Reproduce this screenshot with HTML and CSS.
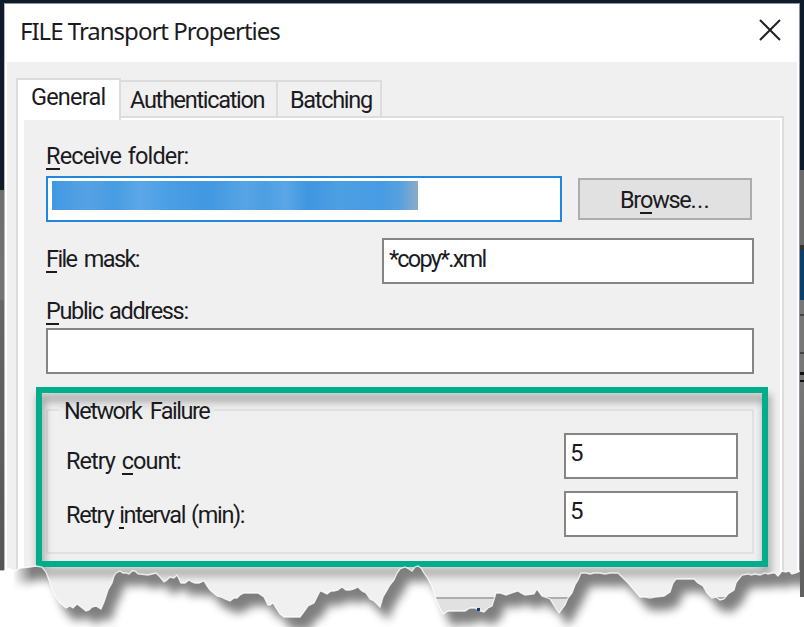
FILE: index.html
```html
<!DOCTYPE html>
<html>
<head>
    <meta charset="utf-8">
    <title>FILE Transport Properties</title>
    <link rel="stylesheet" href="styles.css">
</head>
<body>
    <div class="desktop">
        <div class="edge edge-left"></div>
        <div class="window">
            <div class="title-bar">
                <span class="title">FILE Transport Properties</span>
                <svg class="close" width="22" height="22" viewBox="0 0 22 22">
                    <path d="M1 1 L21 21 M21 1 L1 21" fill="none" stroke="#222" stroke-width="2"/>
                </svg>
            </div>
            <div class="tabs">
                <div class="tab active"><span class="t-general">General</span></div>
                <div class="tab tab-auth"><span class="t-auth">Authentication</span></div>
                <div class="tab tab-batch"><span class="t-batch">Batching</span></div>
            </div>
            <div class="panel">
                <div class="label"><span class="t-receive"><u>R</u>eceive folder:</span></div>
                <div class="row">
                    <div class="input focused"><div class="selection"></div></div>
                    <div class="button"><span class="t-browse">Br<u>o</u>wse<span class="dots">...</span></span></div>
                </div>
                <div class="row mask-row">
                    <div class="mask-label"><span class="t-mask"><u>F</u>ile mask:</span></div>
                    <div class="input mask"><span class="t-xml">*copy*.xml</span></div>
                </div>
                <div class="label public-label"><span class="t-public"><u>P</u>ublic address:</span></div>
                <div class="input public"></div>
                <div class="group">
                    <div class="legend"><span class="t-network">Network Failure</span></div>
                    <div class="row retry">
                        <span class="t-count">Retry <u>c</u>ount:</span>
                        <div class="input number">5</div>
                    </div>
                    <div class="row retry">
                        <span class="t-interval">Retry <u>i</u>nterval (min):</span>
                        <div class="input number">5</div>
                    </div>
                </div>
                <div class="footer">
                    <div class="footer-button"></div>
                    <div class="footer-button"></div>
                </div>
            </div>
        </div>
        <div class="edge edge-right"></div>
        <div class="highlight"></div>
        <!-- torn paper edge -->
        <svg class="torn" width="804" height="67" viewBox="0 560 804 67">
            <defs>
                <path id="paper" d="M-40 500 L-40 571 L4 571 L8 568 L15 571 L20 568 L30 567 L36 566 L42 567 L46 572 L50 583 L54 594 L60 603 L66 608 L70 606 L73 608 L77 604 L81 607 L86 611 L89 610 L92 607 L96 606 L101 609 L104 602 L105 599 L108 590 L112 583 L114 576 L116 573 L120 571 L123 573 L126 573 L129 574 L132 571 L135 571 L138 574 L148 575 L152 574 L156 573 L160 577 L164 582 L167 580 L170 577 L174 578 L177 575 L181 583 L185 583 L189 580 L192 582 L195 583 L199 583 L204 581 L207 586 L210 590 L217 596 L221 597 L225 599 L230 601 L234 598 L237 598 L240 595 L244 593 L258 593 L264 597 L268 605 L270 605 L273 603 L276 608 L280 614 L284 617 L300 617 L303 613 L308 606 L314 603 L317 597 L320 591 L323 592 L327 594 L331 591 L334 591 L338 590 L342 587 L346 590 L350 590 L354 589 L358 587 L362 591 L366 593 L370 599 L374 601 L380 607 L383 597 L386 592 L390 585 L394 580 L397 573 L400 569 L405 567 L409 569 L412 571 L415 567 L418 566 L421 568 L424 573 L428 579 L432 587 L437 602 L443 614 L448 611 L465 611 L470 608 L475 608 L480 611 L484 612 L488 608 L492 606 L496 593 L500 593 L506 595 L512 593 L518 591 L521 593 L525 595 L534 594 L537 589 L542 596 L550 599 L555 607 L559 613 L565 605 L568 598 L572 593 L575 585 L578 580 L581 573 L586 573 L590 574 L594 573 L600 573 L605 574 L610 573 L618 573 L628 583 L640 597 L645 597 L650 598 L655 597 L664 596 L670 592 L673 583 L676 579 L694 579 L698 583 L703 586 L707 593 L712 598 L716 597 L720 600 L724 599 L728 594 L734 590 L736 583 L738 580 L742 575 L748 574 L751 575 L755 574 L760 575 L765 573 L768 574 L772 573 L775 573 L778 576 L782 571 L786 572 L789 571 L792 574 L796 573 L800 571 L840 571 L840 500 Z"/>
                <filter id="soft" filterUnits="userSpaceOnUse" x="-60" y="450" width="940" height="220">
                    <feGaussianBlur stdDeviation="5"/>
                </filter>
                <linearGradient id="fade" x1="0" x2="1" y1="0" y2="0">
                    <stop offset="0.4" stop-color="#fff"/>
                    <stop offset="1" stop-color="#fff" stop-opacity="0"/>
                </linearGradient>
                <mask id="below" maskUnits="userSpaceOnUse" x="0" y="560" width="804" height="67">
                    <rect x="0" y="560" width="804" height="67" fill="#fff"/>
                    <use href="#paper" fill="#000"/>
                </mask>
            </defs>
            <g mask="url(#below)">
                <rect x="0" y="560" width="804" height="67" fill="#fff"/>
                <use href="#paper" x="9" y="13" fill="#000" opacity="0.5" filter="url(#soft)"/>
                <rect x="0" y="560" width="32" height="67" fill="url(#fade)"/>
            </g>
            <use href="#paper" fill="none" stroke="#fff" stroke-width="1.3" opacity="0.8"/>
            <rect x="800" y="560" width="4" height="37" fill="#606060"/>
            <rect x="477" y="608" width="3" height="3" fill="#123a7a"/>
        </svg>
    </div>
</body>
</html>
```
FILE: styles.css
```css
body {
    margin: 0;
    background: #fff;
    font-family: Roboto, "Liberation Sans", sans-serif;
    font-size: 23.5px;
    color: #1b1b1f;
}
.desktop {
    position: relative;
    display: flex;
    width: 804px;
    height: 627px;
    overflow: hidden;
    background: linear-gradient(#0d1b2a 4px, #fff 4px);
}
.edge {
    width: 4px;
    height: 571px;
    flex: none;
}
.edge-left {
    background: linear-gradient(#0d1b2a 190px, #6e6e6e 190px, #747474 300px, #666 300px, #555);
}
.edge-right {
    height: 597px;
    background: linear-gradient(#0d1b2a 170px, #6b6b6b 170px, #6b6b6b 245px, #333 245px, #333 250px, #0d3f6c 250px, #0d3f6c 300px, #777 300px, #777 314px, #444 314px, #444 316px, #777 316px, #777 352px, #444 352px, #444 354px, #777 354px, #777 372px, #111 372px, #111 375px, #777 375px, #777 380px, #111 380px, #111 382px, #777 382px, #606060);
}
.window {
    display: flex;
    flex-direction: column;
    width: 796px;
    height: 627px;
    box-sizing: border-box;
    border-top: 1px solid #8b949c;
    border-left: 1px solid #b4b8bc;
    border-right: 1px solid #8b98a4;
    margin-top: 3px;
    background: #f0f0f0;
    box-shadow: inset 2px 0 0 #fff, inset -2px 0 0 #fff;
}
.title-bar {
    display: flex;
    justify-content: space-between;
    height: 58px;
    flex: none;
    box-sizing: border-box;
    padding: 11px 18px 0 15px;
    background: #fff;
}
.title {
    font-family: "Noto Sans", sans-serif;
    font-size: 24px;
    line-height: 32px;
    letter-spacing: -1px;
}
.close {
    margin-top: 4px;
}
.tabs {
    display: flex;
    align-items: flex-end;
    height: 56px;
    flex: none;
    padding-left: 11px;
}
.tab {
    box-sizing: border-box;
    height: 38px;
    border: 2px solid #dcdcdc;
    border-left: 0;
    border-bottom: 0;
    padding: 3px 0 0 9px;
    line-height: 30px;
    white-space: nowrap;
}
.tab.active {
    position: relative;
    width: 105px;
    height: 42px;
    border-left: 2px solid #dcdcdc;
    padding: 2px 0 0 13px;
    margin-bottom: -2px;
    background: #fff;
    z-index: 1;
}
.tab-auth {
    width: 157px;
}
.tab-batch {
    width: 104px;
    padding-left: 12px;
}
.panel {
    box-sizing: border-box;
    width: 768px;
    height: 520px;
    flex: none;
    margin-left: 11px;
    margin-top: -2px;
    border: 2px solid #dcdcdc;
    box-shadow: inset 6px 0 0 #fff, inset -2px 2px 0 #fff;
    padding: 23px 28px 0 28px;
}
u {
    text-decoration: none;
    border-bottom: 2px solid #1b1b1f;
    display: inline-block;
    line-height: 23px;
}
.label {
    height: 35px;
    line-height: 30px;
}
.row {
    display: flex;
}
.input {
    box-sizing: border-box;
    height: 46px;
    border: 2px solid #858585;
    background: #fff;
    line-height: 39px;
    padding-left: 5px;
}
.focused {
    width: 516px;
    border-color: #2286dc;
    padding: 3px 4px;
}
.selection {
    width: 366px;
    height: 29px;
    background: linear-gradient(90deg, #4299e2, #55a2e4 10%, #489ce2 17%, #5ca7e7 24%, #4a9ee4 32%, #4298e1 43%, #58a4e5 53%, #4c9fe3 58%, #5ba6e6 64%, #3f96e1 70%, #4e9fe3 78%, #479ce3 90%, #57a0df 95%, #8cabc9);
}
.button {
    box-sizing: border-box;
    width: 174px;
    height: 42px;
    margin: 2px 0 0 16px;
    border: 2px solid #adadad;
    background: #e1e1e1;
    text-align: center;
    line-height: 40px;
}
.mask-row {
    margin-top: 16px;
    justify-content: space-between;
}
.mask-label {
    line-height: 42px;
}
.mask {
    width: 372px;
}
.public-label {
    margin-top: 12px;
    height: 32px;
}
.public {
    width: 708px;
}
.group {
    box-sizing: border-box;
    width: 708px;
    height: 145px;
    margin-top: 35px;
    border: 2px solid #e1e1e1;
    padding: 0 14px 0 18px;
}
.legend {
    display: table;
    height: 22px;
    margin: -14px 0 8px -7px;
    padding: 0 5px;
    line-height: 28px;
    background: linear-gradient(transparent 9px, #eaeaea 9px, #efefef 20px);
}
.retry {
    height: 46px;
    justify-content: space-between;
    margin-bottom: 12px;
}
.number {
    width: 174px;
    padding-left: 4px;
    font-size: 24px;
    line-height: 36px;
}
.footer {
    display: flex;
    gap: 13px;
    margin: 43px 0 0 349px;
}
.footer-button {
    box-sizing: border-box;
    width: 174px;
    height: 42px;
    flex: none;
    border: 2px solid #adadad;
    background: #e1e1e1;
}
/* callout around the network failure group */
.highlight {
    position: absolute;
    left: 36px;
    top: 387px;
    width: 720px;
    height: 168px;
    border: 6px solid #00ad8b;
    filter: drop-shadow(2px 8px 4px rgba(0,0,0,0.4));
}
.torn {
    position: absolute;
    left: 0;
    top: 560px;
}
/* per-label tracking */
.t-general { letter-spacing: -0.8px; }
.t-auth { letter-spacing: -1.3px; }
.t-batch { letter-spacing: -1.3px; }
.t-receive { letter-spacing: -0.85px; word-spacing: 1.5px; }
.t-browse { letter-spacing: -1.3px; }
.dots { letter-spacing: 0.3px; }
.t-mask { letter-spacing: -1.6px; word-spacing: 3px; }
.t-xml { letter-spacing: -1.8px; }
.t-public { letter-spacing: -1.35px; word-spacing: 2px; }
.t-network { letter-spacing: -1.5px; word-spacing: 4px; }
.t-count {
    letter-spacing: -1px;
    word-spacing: 2px;
    line-height: 56px;
}
.t-interval {
    letter-spacing: -1.35px;
    word-spacing: 1.5px;
    line-height: 48px;
}
```
